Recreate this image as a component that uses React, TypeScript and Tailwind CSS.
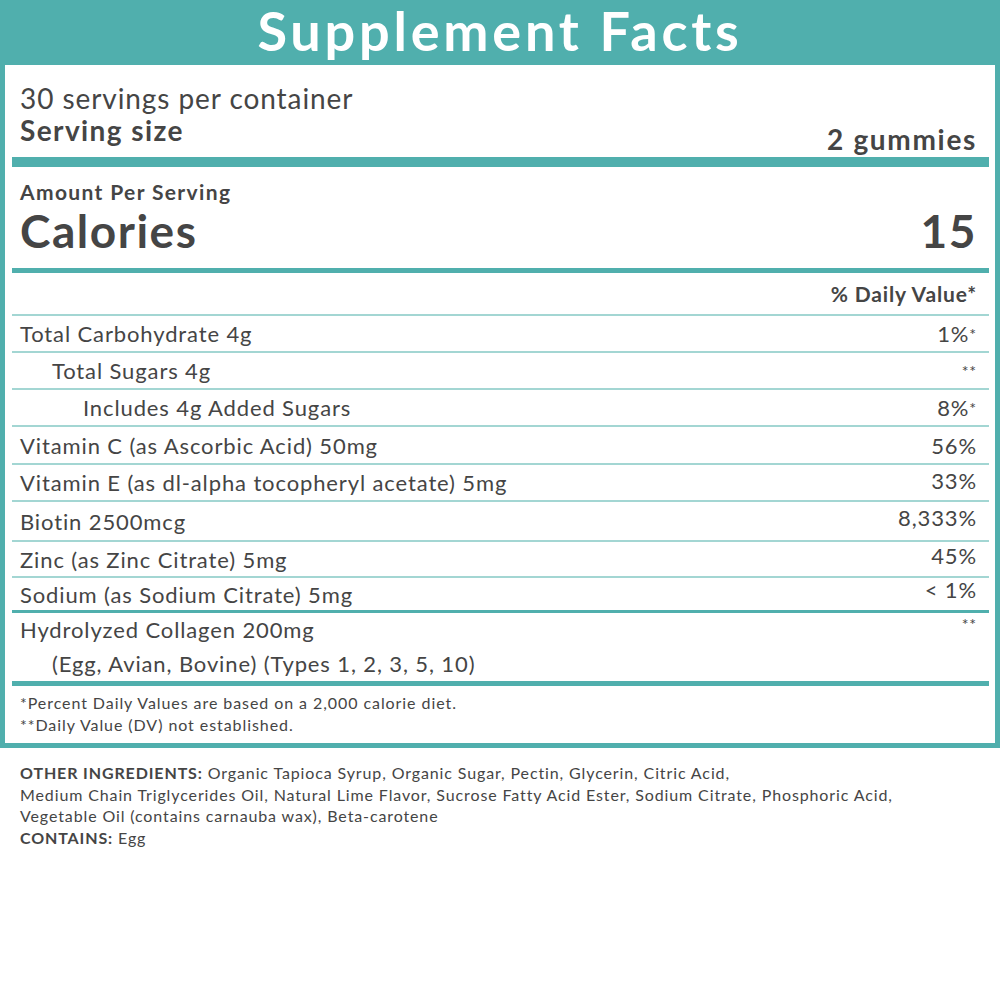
import React from "react";

const rows = [
  { label: "Total Carbohydrate 4g", value: "1%", mark: "*", indent: "pl-2", h: "h-[37px]", lift: "" },
  { label: "Total Sugars 4g", value: "", mark: "**", indent: "pl-[40px]", h: "h-[37px]", lift: "" },
  { label: "Includes 4g Added Sugars", value: "8%", mark: "*", indent: "pl-[71px]", h: "h-[37px]", lift: "" },
  { label: "Vitamin C (as Ascorbic Acid) 50mg", value: "56%", mark: "", indent: "pl-2", h: "h-[38px]", lift: "" },
  { label: "Vitamin E (as dl-alpha tocopheryl acetate) 5mg", value: "33%", mark: "", indent: "pl-2", h: "h-[37px]", lift: "-translate-y-[2px]" },
  { label: "Biotin 2500mcg", value: "8,333%", mark: "", indent: "pl-2", h: "h-[40px]", lift: "-translate-y-[4px]" },
  { label: "Zinc (as Zinc Citrate) 5mg", value: "45%", mark: "", indent: "pl-2", h: "h-[36px]", lift: "-translate-y-[4px]" },
  { label: "Sodium (as Sodium Citrate) 5mg", value: "< 1%", mark: "", indent: "pl-2", h: "h-[34px]", lift: "-translate-y-[5px]" },
];

export default function App() {
  return (
    <div
      className="w-[1000px] h-[1000px] bg-white text-[#454545]"
      style={{ fontFamily: "Lato, 'Open Sans', sans-serif" }}
    >
      {/* Facts panel */}
      <div className="border-x-[5px] border-b-[5px] border-[#50afad]">
        <div className="h-[65px] bg-[#50afad] text-center text-white font-bold text-[54px] leading-[62px] tracking-[0.07em]">
          Supplement Facts
        </div>

        <div className="pl-[7px] pr-[6px]">
          {/* Servings */}
          <div className="h-[92px] pl-2 pr-[12px] pt-[14px] flex justify-between items-end pb-[3px]">
            <div className="flex flex-col">
              <span className="text-[28px] leading-[34px] tracking-[0.033em]">30 servings per container</span>
              <span className="text-[28px] leading-[30px] font-bold mb-[9px] tracking-[0.05em]">Serving size</span>
            </div>
            <span className="text-[28px] leading-[30px] font-bold tracking-[0.06em]">2 gummies</span>
          </div>
          <div className="h-[10px] bg-[#50afad]" />

          {/* Calories */}
          <div className="h-[101px] pl-2 pr-[12px] pt-[12px]">
            <div className="text-[21px] leading-[26px] font-bold tracking-[0.065em]">Amount Per Serving</div>
            <div className="flex justify-between text-[46px] leading-[52px] font-bold tracking-[0.033em]">
              <span>Calories</span>
              <span>15</span>
            </div>
          </div>
          <div className="h-[5px] bg-[#50afad]" />

          <div className="h-[41px] pl-2 pr-[12px] flex justify-end items-center text-[21px] font-bold tracking-[0.04em]">
            % Daily Value*
          </div>

          {/* Nutrient rows */}
          {rows.map((r) => (
            <div
              key={r.label}
              className={`${r.h} border-t-2 border-[#a3d6d3] ${r.indent} pr-[12px] flex justify-between items-center text-[22px] tracking-[0.04em]`}
            >
              <span>{r.label}</span>
              <span className={r.lift}>
                {r.value}
                {r.mark && (
                  <sup className="text-[16px] relative -top-[2px]">{r.mark}</sup>
                )}
              </span>
            </div>
          ))}

          <div className="h-[71px] border-t-[3px] border-[#50afad] pl-2 pr-[12px] flex justify-between items-start text-[22px] leading-[34px] tracking-[0.04em]">
            <div>
              <div>Hydrolyzed Collagen 200mg</div>
              <div className="pl-8">(Egg, Avian, Bovine) (Types 1, 2, 3, 5, 10)</div>
            </div>
            <span className="text-[16px] leading-[16px] pt-[3px]">**</span>
          </div>
          <div className="h-[5px] bg-[#50afad]" />

          {/* Footnotes */}
          <div className="h-[57px] pl-2 pt-[6px] text-[16px] leading-[22px] tracking-[0.058em]">
            <div>*Percent Daily Values are based on a 2,000 calorie diet.</div>
            <div>**Daily Value (DV) not established.</div>
          </div>
        </div>
      </div>

      {/* Ingredients */}
      <div className="pl-5 pt-[14px] text-[16px] leading-[21.6px] tracking-[0.055em]">
        <span className="font-bold">OTHER INGREDIENTS:</span> Organic Tapioca Syrup, Organic Sugar, Pectin, Glycerin, Citric Acid,
        <br />
        Medium Chain Triglycerides Oil, Natural Lime Flavor, Sucrose Fatty Acid Ester, Sodium Citrate, Phosphoric Acid,
        <br />
        Vegetable Oil (contains carnauba wax), Beta-carotene
        <br />
        <span className="font-bold">CONTAINS:</span> Egg
      </div>
    </div>
  );
}
